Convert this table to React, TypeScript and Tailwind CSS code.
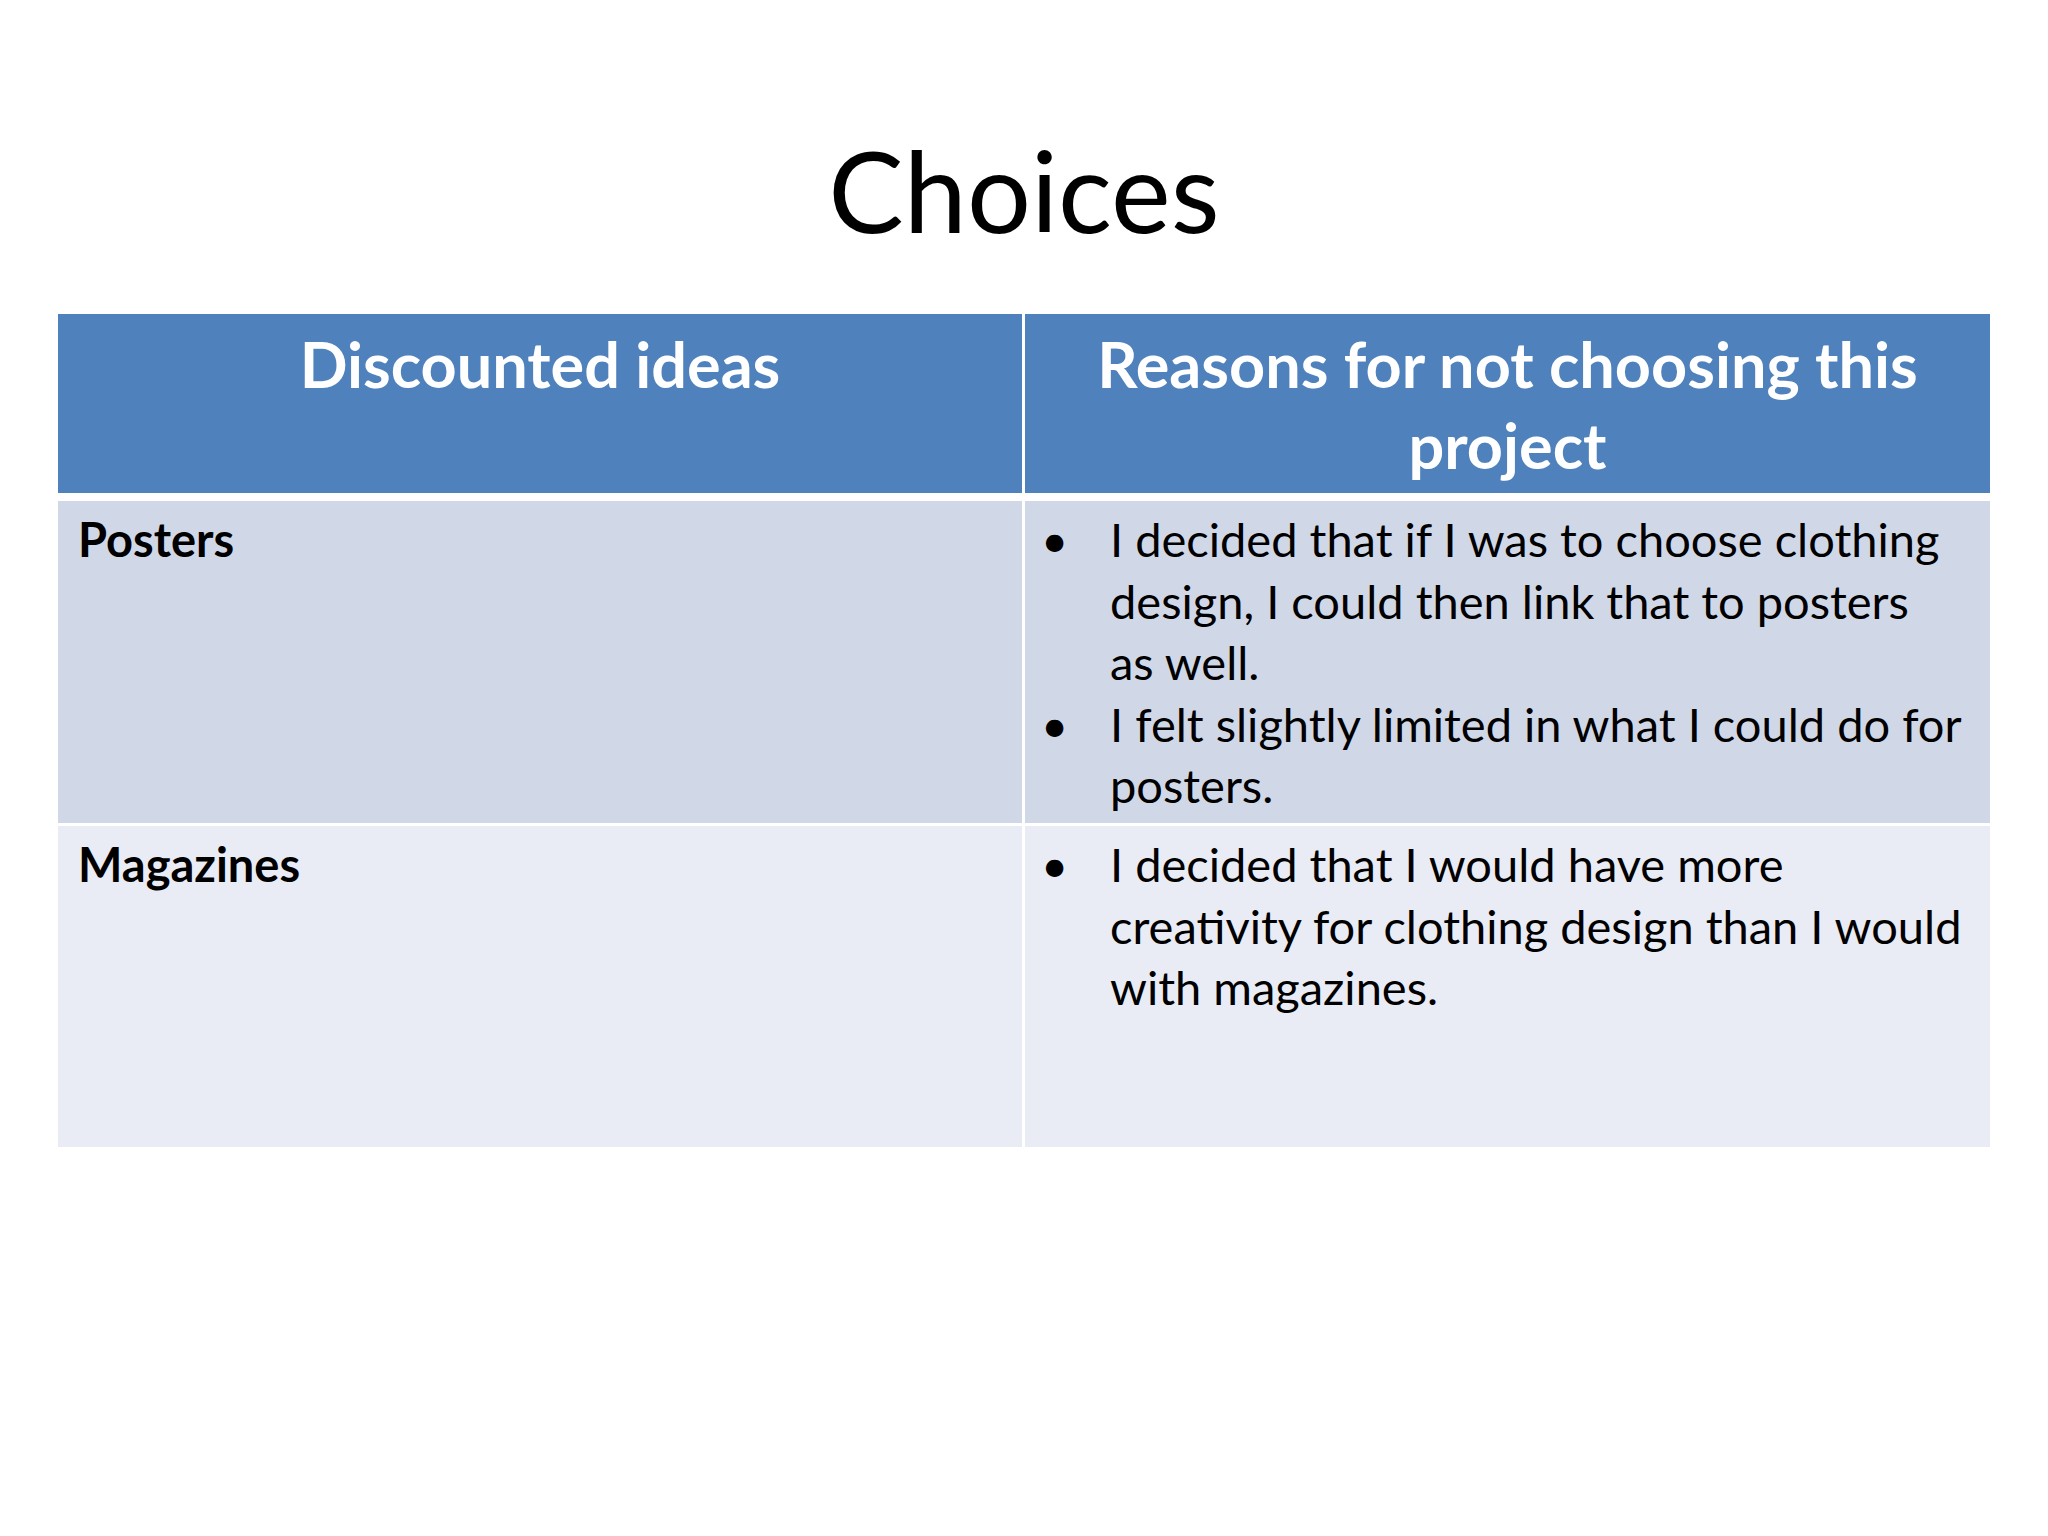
import React from 'react';

const rows = [
  {
    idea: 'Posters',
    bg: 'bg-[#d0d8e8]',
    height: 'h-[322px]',
    reasons: [
      ['I decided that if I was to choose clothing', 'design, I could then link that to posters', 'as well.'],
      ['I felt slightly limited in what I could do for', 'posters.'],
    ],
  },
  {
    idea: 'Magazines',
    bg: 'bg-[#e9ecf4]',
    height: 'h-[321px]',
    reasons: [['I decided that I would have more', 'creativity for clothing design than I would', 'with magazines.']],
  },
];

const App: React.FC = () => {
  return (
    <div className="w-[2048px] h-[1536px] bg-white font-['Lato',sans-serif] text-black">
      {/* Title */}
      <div className="h-[314px] pt-[133px] text-center">
        <h1 className="text-[113px] leading-none font-normal">Choices</h1>
      </div>

      {/* Table */}
      <div className="ml-[58px] w-[1932px] flex flex-col">
        <div className="flex gap-[3px] h-[179px] mb-[8px]">
          <div className="w-[964px] bg-[#4f81bd] pt-[9px] text-center text-white font-bold text-[63px] leading-[81px]">
            Discounted ideas
          </div>
          <div className="w-[965px] bg-[#4f81bd] pt-[9px] text-center text-white font-bold text-[63px] leading-[81px]">
            Reasons for not choosing this
            <br />
            project
          </div>
        </div>

        {rows.map((row, i) => (
          <div key={row.idea} className={`flex gap-[3px] ${row.height} ${i === 0 ? 'mb-[3px]' : ''}`}>
            <div className={`w-[964px] ${row.bg} pt-[8px] pl-[20px] font-bold text-[47px] leading-[61.5px]`}>
              {row.idea}
            </div>
            <div className={`w-[965px] ${row.bg} pt-[8px] pl-[16px] text-[47px] leading-[61.5px]`}>
              {row.reasons.map((lines, j) => (
                <div key={j} className="flex">
                  <span className="w-[69px] shrink-0">•</span>
                  <div className="whitespace-nowrap">
                    {lines.map((l, k) => (
                      <div key={k}>{l}</div>
                    ))}
                  </div>
                </div>
              ))}
            </div>
          </div>
        ))}
      </div>
    </div>
  );
};

export default App;
